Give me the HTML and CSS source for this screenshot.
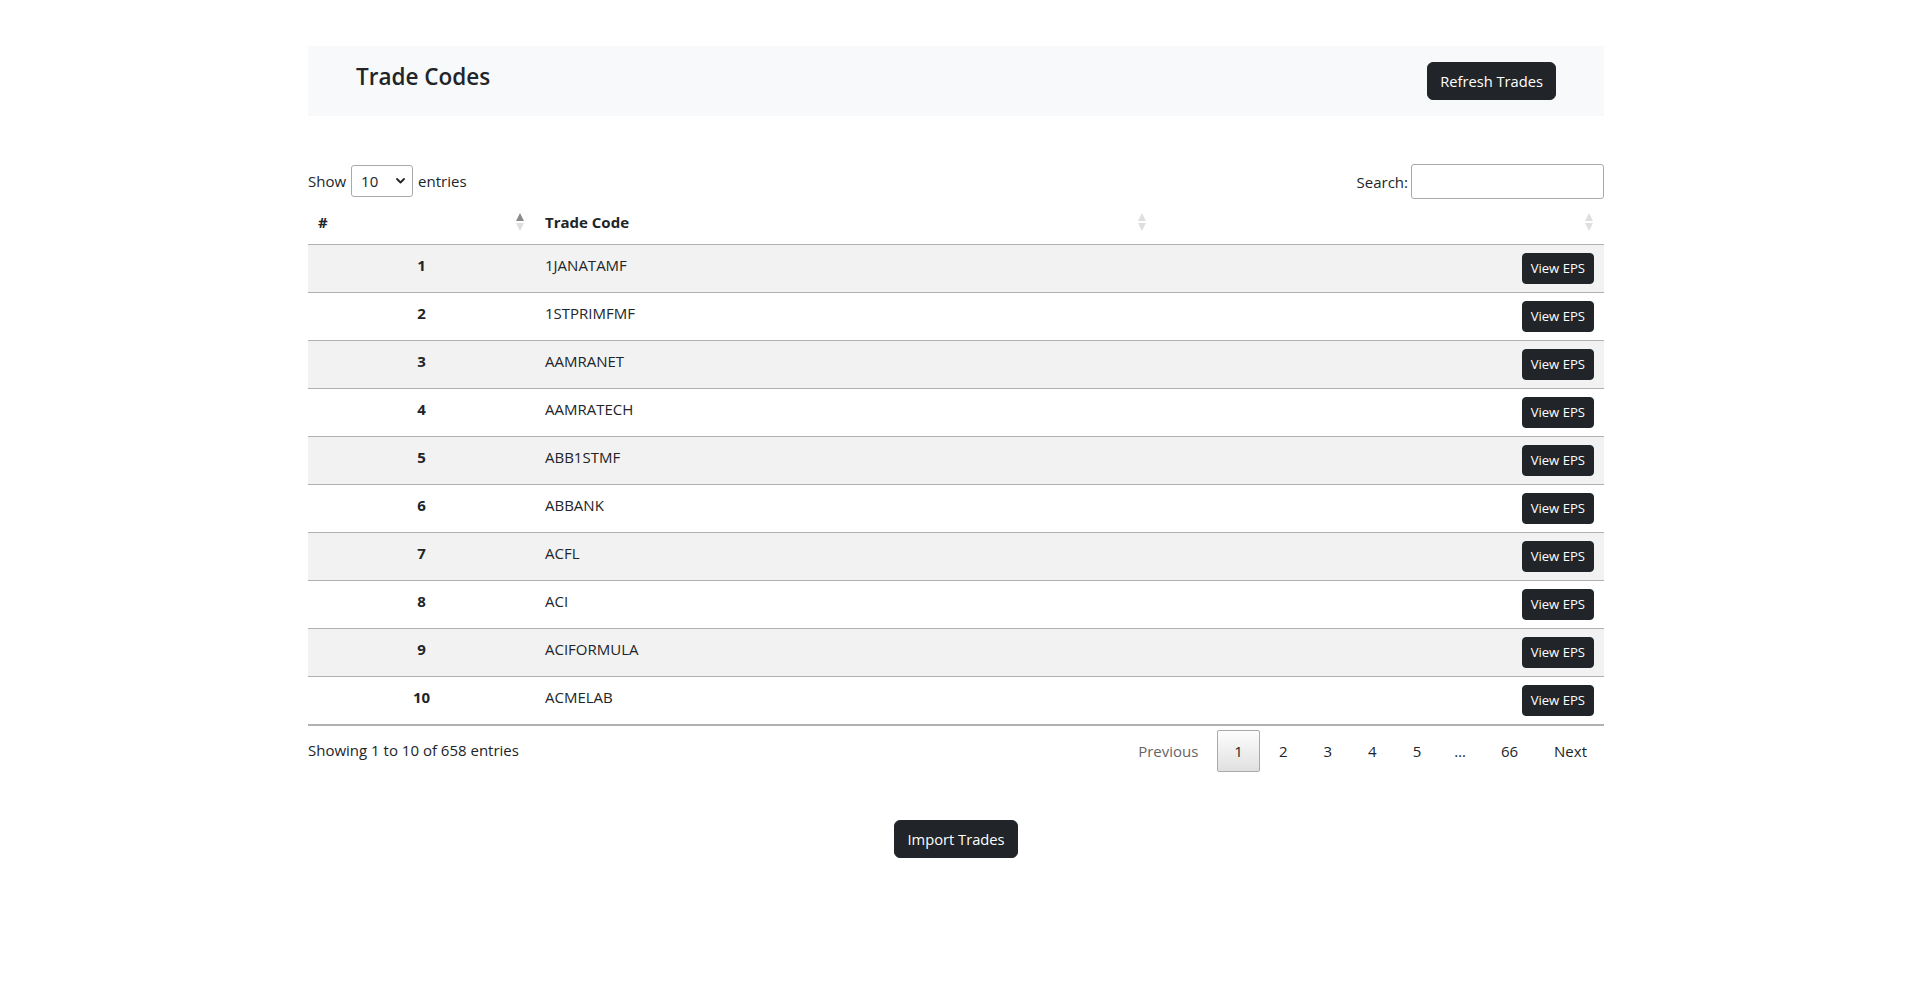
FILE: index.html
```html
<!DOCTYPE html>
<html lang="en">
<head>
<meta charset="utf-8">
<title>Trade Codes</title>
<link rel="stylesheet" href="styles.css">
</head>
<body>
<div class="container">
  <div class="page-header">
    <h4 class="title">Trade Codes</h4>
    <button class="btn btn-dark" type="button">Refresh Trades</button>
  </div>

  <div class="dt-wrapper">
    <div class="dt-top">
      <label class="dt-length">Show
        <span class="select-wrap">
          <select class="dt-select"><option>10</option><option>25</option><option>50</option><option>100</option></select>
          <svg class="chevron" width="9" height="6" viewBox="0 0 9 6" aria-hidden="true"><path d="M1 1 L4.5 4.5 L8 1" fill="none" stroke="#212529" stroke-width="1.8" stroke-linecap="round" stroke-linejoin="round"/></svg>
        </span>
        entries</label>
      <label class="dt-filter">Search:<input class="dt-input" type="search"></label>
    </div>

    <table class="dt-table">
      <colgroup>
        <col class="c-num">
        <col class="c-code">
        <col class="c-act">
      </colgroup>
      <thead>
        <tr>
          <th class="sorting sorting-asc">#</th>
          <th class="sorting">Trade Code</th>
          <th class="sorting"></th>
        </tr>
      </thead>
      <tbody>
        <tr><td class="num">1</td><td>1JANATAMF</td><td class="act"><button class="btn btn-dark btn-sm" type="button">View EPS</button></td></tr>
        <tr><td class="num">2</td><td>1STPRIMFMF</td><td class="act"><button class="btn btn-dark btn-sm" type="button">View EPS</button></td></tr>
        <tr><td class="num">3</td><td>AAMRANET</td><td class="act"><button class="btn btn-dark btn-sm" type="button">View EPS</button></td></tr>
        <tr><td class="num">4</td><td>AAMRATECH</td><td class="act"><button class="btn btn-dark btn-sm" type="button">View EPS</button></td></tr>
        <tr><td class="num">5</td><td>ABB1STMF</td><td class="act"><button class="btn btn-dark btn-sm" type="button">View EPS</button></td></tr>
        <tr><td class="num">6</td><td>ABBANK</td><td class="act"><button class="btn btn-dark btn-sm" type="button">View EPS</button></td></tr>
        <tr><td class="num">7</td><td>ACFL</td><td class="act"><button class="btn btn-dark btn-sm" type="button">View EPS</button></td></tr>
        <tr><td class="num">8</td><td>ACI</td><td class="act"><button class="btn btn-dark btn-sm" type="button">View EPS</button></td></tr>
        <tr><td class="num">9</td><td>ACIFORMULA</td><td class="act"><button class="btn btn-dark btn-sm" type="button">View EPS</button></td></tr>
        <tr><td class="num">10</td><td>ACMELAB</td><td class="act"><button class="btn btn-dark btn-sm" type="button">View EPS</button></td></tr>
      </tbody>
    </table>

    <div class="dt-bottom">
      <div class="dt-info">Showing 1 to 10 of 658 entries</div>
      <div class="dt-paginate">
        <a class="pg disabled">Previous</a>
        <a class="pg current">1</a>
        <a class="pg">2</a>
        <a class="pg">3</a>
        <a class="pg">4</a>
        <a class="pg">5</a>
        <span class="ellipsis">…</span>
        <a class="pg">66</a>
        <a class="pg">Next</a>
      </div>
    </div>
  </div>

  <div class="import-row">
    <button class="btn btn-dark" type="button">Import Trades</button>
  </div>
</div>
</body>
</html>
```

FILE: styles.css
```css
* {
  box-sizing: border-box;
}

body {
  margin: 0;
  padding-right: 4px;
  font-family: "Open Sans", "Noto Sans", sans-serif;
  font-size: 15px;
  line-height: 24px;
  color: #212529;
  background: #fff;
}

.container {
  max-width: 1296px;
  margin: 46px auto 0;
}

.page-header {
  background: #f8f9fa;
  padding: 16px 48px;
  display: flex;
  justify-content: space-between;
  align-items: center;
}

.title {
  margin: 0 0 8px;
  font-size: 22.5px;
  font-weight: 600;
  line-height: 28.8px;
}

.btn {
  display: inline-block;
  font-family: inherit;
  font-size: 14.7px;
  line-height: 24px;
  padding: 6px 12px;
  border: 1px solid #212529;
  border-radius: 6px;
  cursor: pointer;
}

.btn-dark {
  background: #212529;
  color: #fff;
}

.btn-sm {
  padding: 4px 8px;
  font-size: 13.1px;
  line-height: 21px;
  border-radius: 4px;
  vertical-align: top;
}

.dt-wrapper {
  margin-top: 48px;
}

.dt-top {
  display: flex;
  justify-content: space-between;
  align-items: flex-start;
}

.dt-length,
.dt-filter {
  display: flex;
  align-items: center;
}

.dt-length {
  margin-top: 1px;
}

.select-wrap {
  position: relative;
  display: inline-block;
  margin: 0 5px;
  height: 32px;
}

.dt-select {
  -webkit-appearance: none;
  appearance: none;
  width: 62px;
  height: 32px;
  border: 1px solid #aaa;
  border-radius: 3px;
  padding: 0 0 0 9px;
  font-family: inherit;
  font-size: 15px;
  color: #212529;
  background: #fff;
}

.chevron {
  position: absolute;
  left: 45px;
  top: 13px;
  pointer-events: none;
}

.dt-input {
  width: 193px;
  height: 35px;
  margin-left: 3px;
  margin-bottom: 1px;
  border: 1px solid #aaa;
  border-radius: 3px;
  padding: 5px;
  font-family: inherit;
  font-size: 15px;
  background: transparent;
}

.dt-table {
  width: 100%;
  table-layout: fixed;
  border-collapse: separate;
  border-spacing: 0;
  border-bottom: 1px solid #b0b0b0;
}

.c-num { width: 227px; }
.c-code { width: 622px; }
.c-act { width: 447px; }

.dt-table th {
  position: relative;
  padding: 10px 18px 10px 10px;
  text-align: left;
  font-weight: 700;
  line-height: 24px;
  border-bottom: 1px solid #b0b0b0;
}

.sorting::before,
.sorting::after {
  content: "";
  position: absolute;
  right: 11px;
  width: 0;
  height: 0;
  border-left: 4.5px solid transparent;
  border-right: 4.5px solid transparent;
}

.sorting::before {
  bottom: 50%;
  margin-bottom: 1px;
  border-bottom: 8px solid #dfdfdf;
}

.sorting::after {
  top: 50%;
  margin-top: 1px;
  border-top: 8px solid #dfdfdf;
}

.sorting-asc::before {
  border-bottom-color: #8a8b8c;
}

.dt-table td {
  padding: 8px 10px;
  line-height: 24px;
  vertical-align: top;
  border-bottom: 1px solid #b0b0b0;
}

.dt-table tbody tr:nth-child(odd) td {
  background: #f2f2f2;
}

.num {
  text-align: center;
  font-weight: 700;
}

.act {
  text-align: right;
}

.dt-bottom {
  display: flex;
  justify-content: space-between;
  align-items: flex-start;
}

.dt-info {
  padding-top: 12px;
}

.dt-paginate {
  padding-top: 4px;
  display: flex;
  align-items: flex-start;
}

.pg {
  display: inline-block;
  min-width: 24px;
  padding: 8px 16px;
  margin-left: 2px;
  border: 1px solid transparent;
  border-radius: 2px;
  text-align: center;
  color: #212529;
  cursor: pointer;
}

.pg.disabled {
  color: #666;
  cursor: default;
}

.pg.current {
  border-color: #a9a9a9;
  background: linear-gradient(to bottom, #fdfdfd 0%, #e0e0e0 100%);
}

.ellipsis {
  padding: 9px 16px;
}

.import-row {
  margin-top: 48px;
  text-align: center;
}
```
